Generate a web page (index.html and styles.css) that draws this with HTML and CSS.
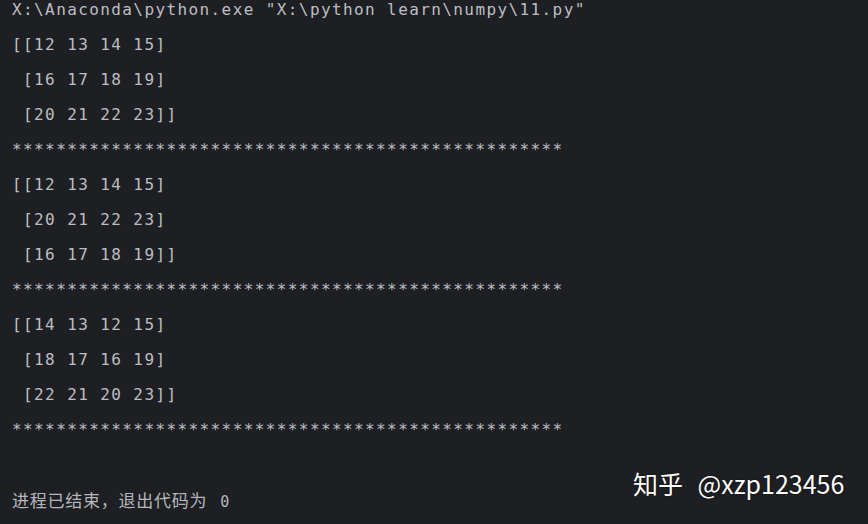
FILE: index.html
```html
<!DOCTYPE html>
<html lang="zh">
<head>
<meta charset="utf-8">
<link rel="stylesheet" href="styles.css">
</head>
<body>
<div class="console">
<div class="line">X:\Anaconda\python.exe "X:\python learn\numpy\11.py"</div>
<div class="line">[[12 13 14 15]</div>
<div class="line"> [16 17 18 19]</div>
<div class="line"> [20 21 22 23]]</div>
<div class="line">**************************************************</div>
<div class="line">[[12 13 14 15]</div>
<div class="line"> [20 21 22 23]</div>
<div class="line"> [16 17 18 19]]</div>
<div class="line">**************************************************</div>
<div class="line">[[14 13 12 15]</div>
<div class="line"> [18 17 16 19]</div>
<div class="line"> [22 21 20 23]]</div>
<div class="line">**************************************************</div>
<div class="line"> </div>
<div class="line exit">进程已结束，退出代码为<span class="code">0</span></div>
</div>
<div class="watermark">知乎 @xzp123456</div>
</body>
</html>
```
FILE: styles.css
```css
html, body {
  margin: 0;
  padding: 0;
  background: #1e1f22;
  height: 100%;
  overflow: hidden;
}
body {
  position: relative;
}
.console {
  margin-top: -8px;
  padding-left: 12px;
  color: #bcbec4;
  font-family: "DejaVu Sans Mono", "Liberation Mono", monospace;
  font-size: 16px;
  letter-spacing: 1.4px;
}
.line {
  white-space: pre;
  height: 35px;
  line-height: 35px;
}
.exit {
  font-family: "Noto Sans CJK SC", sans-serif;
  font-size: 17px;
  letter-spacing: 0.75px;
  color: #b4b6bc;
}
.exit .code {
  font-family: "DejaVu Sans Mono", monospace;
  font-size: 15px;
  letter-spacing: 0;
  margin-left: 13px;
}
.watermark {
  position: absolute;
  left: 633px;
  top: 464px;
  color: #ffffff;
  font-family: "Noto Sans CJK SC", "Noto Sans", sans-serif;
  font-size: 25px;
  line-height: 38px;
  word-spacing: 9px;
  text-shadow: 0 0 2px rgba(0,0,0,0.6);
}
```
